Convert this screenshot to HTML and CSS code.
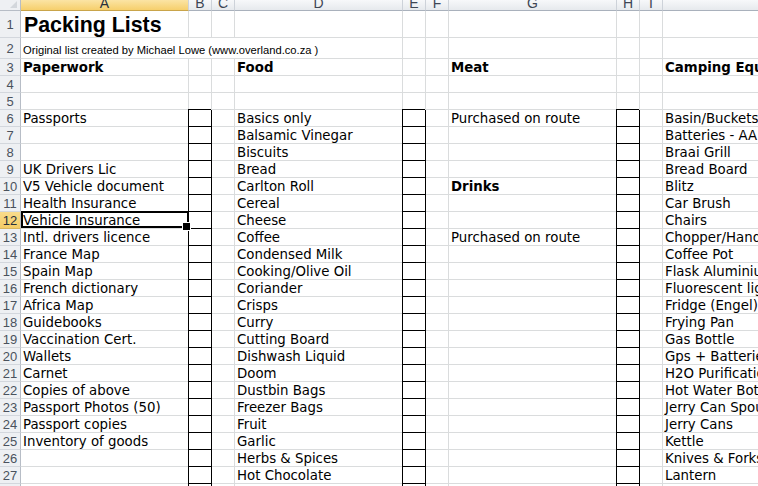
FILE: index.html
```html
<!DOCTYPE html>
<html>
<head>
<meta charset="utf-8">
<title>Packing Lists</title>
<link rel="stylesheet" href="styles.css">
</head>
<body>
<div class="sheet">
  <div class="corner"><svg width="20" height="10" viewBox="0 0 20 10"><polygon points="17,1 17,8 10,8" fill="#d3d7dc"/></svg></div>
  <div class="ch sel">A</div><div class="ch">B</div><div class="ch">C</div><div class="ch">D</div><div class="ch">E</div><div class="ch">F</div><div class="ch">G</div><div class="ch">H</div><div class="ch">I</div><div class="ch">J</div>

  <div class="rh">1</div><div class="c t">Packing Lists</div><div class="c"></div><div class="c"></div><div class="c"></div><div class="c"></div><div class="c"></div><div class="c"></div><div class="c"></div><div class="c"></div><div class="c"></div>
  <div class="rh">2</div><div class="c s wide">Original list created by Michael Lowe (www.overland.co.za )</div><div class="c"></div><div class="c"></div><div class="c"></div><div class="c"></div><div class="c"></div><div class="c"></div>
  <div class="rh">3</div><div class="c b">Paperwork</div><div class="c"></div><div class="c"></div><div class="c b">Food</div><div class="c"></div><div class="c"></div><div class="c b">Meat</div><div class="c"></div><div class="c"></div><div class="c b">Camping Equipment</div>
  <div class="rh">4</div><div class="c"></div><div class="c"></div><div class="c"></div><div class="c"></div><div class="c"></div><div class="c"></div><div class="c"></div><div class="c"></div><div class="c"></div><div class="c"></div>
  <div class="rh">5</div><div class="c"></div><div class="c"></div><div class="c"></div><div class="c"></div><div class="c"></div><div class="c"></div><div class="c"></div><div class="c"></div><div class="c"></div><div class="c"></div>
  <div class="rh">6</div><div class="c">Passports</div><div class="c x"></div><div class="c"></div><div class="c">Basics only</div><div class="c x"></div><div class="c"></div><div class="c">Purchased on route</div><div class="c x"></div><div class="c"></div><div class="c">Basin/Buckets</div>
  <div class="rh">7</div><div class="c"></div><div class="c x"></div><div class="c"></div><div class="c">Balsamic Vinegar</div><div class="c x"></div><div class="c"></div><div class="c"></div><div class="c x"></div><div class="c"></div><div class="c">Batteries - AA</div>
  <div class="rh">8</div><div class="c"></div><div class="c x"></div><div class="c"></div><div class="c">Biscuits</div><div class="c x"></div><div class="c"></div><div class="c"></div><div class="c x"></div><div class="c"></div><div class="c">Braai Grill</div>
  <div class="rh">9</div><div class="c">UK Drivers Lic</div><div class="c x"></div><div class="c"></div><div class="c">Bread</div><div class="c x"></div><div class="c"></div><div class="c"></div><div class="c x"></div><div class="c"></div><div class="c">Bread Board</div>
  <div class="rh">10</div><div class="c">V5 Vehicle document</div><div class="c x"></div><div class="c"></div><div class="c">Carlton Roll</div><div class="c x"></div><div class="c"></div><div class="c b">Drinks</div><div class="c x"></div><div class="c"></div><div class="c">Blitz</div>
  <div class="rh">11</div><div class="c">Health Insurance</div><div class="c x"></div><div class="c"></div><div class="c">Cereal</div><div class="c x"></div><div class="c"></div><div class="c"></div><div class="c x"></div><div class="c"></div><div class="c">Car Brush</div>
  <div class="rh sel">12</div><div class="c active">Vehicle Insurance</div><div class="c x"></div><div class="c"></div><div class="c">Cheese</div><div class="c x"></div><div class="c"></div><div class="c"></div><div class="c x"></div><div class="c"></div><div class="c">Chairs</div>
  <div class="rh">13</div><div class="c">Intl. drivers licence</div><div class="c x"></div><div class="c"></div><div class="c">Coffee</div><div class="c x"></div><div class="c"></div><div class="c">Purchased on route</div><div class="c x"></div><div class="c"></div><div class="c">Chopper/Hand blender</div>
  <div class="rh">14</div><div class="c">France Map</div><div class="c x"></div><div class="c"></div><div class="c">Condensed Milk</div><div class="c x"></div><div class="c"></div><div class="c"></div><div class="c x"></div><div class="c"></div><div class="c">Coffee Pot</div>
  <div class="rh">15</div><div class="c">Spain Map</div><div class="c x"></div><div class="c"></div><div class="c">Cooking/Olive Oil</div><div class="c x"></div><div class="c"></div><div class="c"></div><div class="c x"></div><div class="c"></div><div class="c">Flask Aluminium</div>
  <div class="rh">16</div><div class="c">French dictionary</div><div class="c x"></div><div class="c"></div><div class="c">Coriander</div><div class="c x"></div><div class="c"></div><div class="c"></div><div class="c x"></div><div class="c"></div><div class="c">Fluorescent light</div>
  <div class="rh">17</div><div class="c">Africa Map</div><div class="c x"></div><div class="c"></div><div class="c">Crisps</div><div class="c x"></div><div class="c"></div><div class="c"></div><div class="c x"></div><div class="c"></div><div class="c">Fridge (Engel)</div>
  <div class="rh">18</div><div class="c">Guidebooks</div><div class="c x"></div><div class="c"></div><div class="c">Curry</div><div class="c x"></div><div class="c"></div><div class="c"></div><div class="c x"></div><div class="c"></div><div class="c">Frying Pan</div>
  <div class="rh">19</div><div class="c">Vaccination Cert.</div><div class="c x"></div><div class="c"></div><div class="c">Cutting Board</div><div class="c x"></div><div class="c"></div><div class="c"></div><div class="c x"></div><div class="c"></div><div class="c">Gas Bottle</div>
  <div class="rh">20</div><div class="c">Wallets</div><div class="c x"></div><div class="c"></div><div class="c">Dishwash Liquid</div><div class="c x"></div><div class="c"></div><div class="c"></div><div class="c x"></div><div class="c"></div><div class="c">Gps + Batteries</div>
  <div class="rh">21</div><div class="c">Carnet</div><div class="c x"></div><div class="c"></div><div class="c">Doom</div><div class="c x"></div><div class="c"></div><div class="c"></div><div class="c x"></div><div class="c"></div><div class="c">H2O Purification</div>
  <div class="rh">22</div><div class="c">Copies of above</div><div class="c x"></div><div class="c"></div><div class="c">Dustbin Bags</div><div class="c x"></div><div class="c"></div><div class="c"></div><div class="c x"></div><div class="c"></div><div class="c">Hot Water Bottle</div>
  <div class="rh">23</div><div class="c">Passport Photos (50)</div><div class="c x"></div><div class="c"></div><div class="c">Freezer Bags</div><div class="c x"></div><div class="c"></div><div class="c"></div><div class="c x"></div><div class="c"></div><div class="c">Jerry Can Spout</div>
  <div class="rh">24</div><div class="c">Passport copies</div><div class="c x"></div><div class="c"></div><div class="c">Fruit</div><div class="c x"></div><div class="c"></div><div class="c"></div><div class="c x"></div><div class="c"></div><div class="c">Jerry Cans</div>
  <div class="rh">25</div><div class="c">Inventory of goods</div><div class="c x"></div><div class="c"></div><div class="c">Garlic</div><div class="c x"></div><div class="c"></div><div class="c"></div><div class="c x"></div><div class="c"></div><div class="c">Kettle</div>
  <div class="rh">26</div><div class="c"></div><div class="c x"></div><div class="c"></div><div class="c">Herbs &amp; Spices</div><div class="c x"></div><div class="c"></div><div class="c"></div><div class="c x"></div><div class="c"></div><div class="c">Knives &amp; Forks</div>
  <div class="rh">27</div><div class="c"></div><div class="c x"></div><div class="c"></div><div class="c">Hot Chocolate</div><div class="c x"></div><div class="c"></div><div class="c"></div><div class="c x"></div><div class="c"></div><div class="c">Lantern</div>
  <div class="rh">28</div><div class="c"></div><div class="c x"></div><div class="c"></div><div class="c"></div><div class="c x"></div><div class="c"></div><div class="c"></div><div class="c x"></div><div class="c"></div><div class="c"></div>
</div>
</body>
</html>
```
FILE: styles.css
```css
* {
  box-sizing: border-box;
  margin: 0;
  padding: 0;
}

html,
body {
  width: 758px;
  height: 486px;
  overflow: hidden;
  background: #ffffff;
}

body {
  font-family: "DejaVu Sans", Verdana, sans-serif;
  font-size: 13.33px;
  color: #000000;
}

.sheet {
  display: grid;
  grid-template-columns: 21px 168px 23px 23px 168px 23px 23px 168px 23px 23px 220px;
  grid-template-rows: 11px 27px 21px repeat(26, 17px);
  width: 880px;
}

.corner {
  background: #eef0f3;
  border-right: 1px solid #b7bdc6;
  border-bottom: 1px solid #b7bdc6;
  overflow: hidden;
}

.corner svg {
  display: block;
}

.ch {
  display: flex;
  align-items: flex-end;
  justify-content: center;
  overflow: hidden;
  font-family: "Liberation Sans", Arial, sans-serif;
  font-size: 14px;
  line-height: 13px;
  color: #3e4654;
  background: linear-gradient(#f7f8fa, #e6e9ed);
  border-right: 1px solid #cdd2d9;
  border-bottom: 1px solid #a9b1bc;
}

.ch.sel {
  background: linear-gradient(#fbe4a4, #f6cf6c);
  border-bottom-color: #c9a44a;
  color: #28303c;
}

.rh {
  display: flex;
  align-items: center;
  justify-content: center;
  overflow: hidden;
  font-family: "Liberation Sans", Arial, sans-serif;
  font-size: 13px;
  line-height: 15px;
  color: #4a525d;
  background: #eef0f3;
  border-right: 1px solid #b7bdc6;
  border-bottom: 1px solid #d3d7dd;
  padding-top: 1px;
}

.rh.sel {
  background: linear-gradient(#f9dc8c, #f4cc66);
  color: #28303c;
  border-bottom-color: #d9b65e;
}

.c {
  display: flex;
  align-items: flex-end;
  padding-left: 2px;
  white-space: nowrap;
  overflow: hidden;
  line-height: 15px;
  border-right: 1px solid #dadcdd;
  border-bottom: 1px solid #dadcdd;
}

.c.b {
  font-weight: bold;
}

.c.t {
  font-family: "Liberation Sans", Arial, sans-serif;
  font-weight: bold;
  font-size: 21.33px;
  line-height: 24px;
  padding-left: 3px;
}

.c.s {
  font-family: "Liberation Sans", Arial, sans-serif;
  font-size: 11.2px;
  line-height: 13px;
  padding-bottom: 1px;
}

.c.wide {
  grid-column: span 4;
}

.c.x {
  border-right-color: #000000;
  border-bottom-color: #000000;
  box-shadow: -1px -1px 0 0 #000000;
}

.c.active {
  position: relative;
  overflow: visible;
}

.c.active::after {
  content: "";
  position: absolute;
  top: -1px;
  left: 0;
  right: -1px;
  bottom: 0;
  border: 2px solid #000000;
}

.c.active::before {
  content: "";
  position: absolute;
  right: -3px;
  bottom: -3px;
  width: 7px;
  height: 7px;
  background: #000000;
  border: 1px solid #ffffff;
  z-index: 1;
}
```
